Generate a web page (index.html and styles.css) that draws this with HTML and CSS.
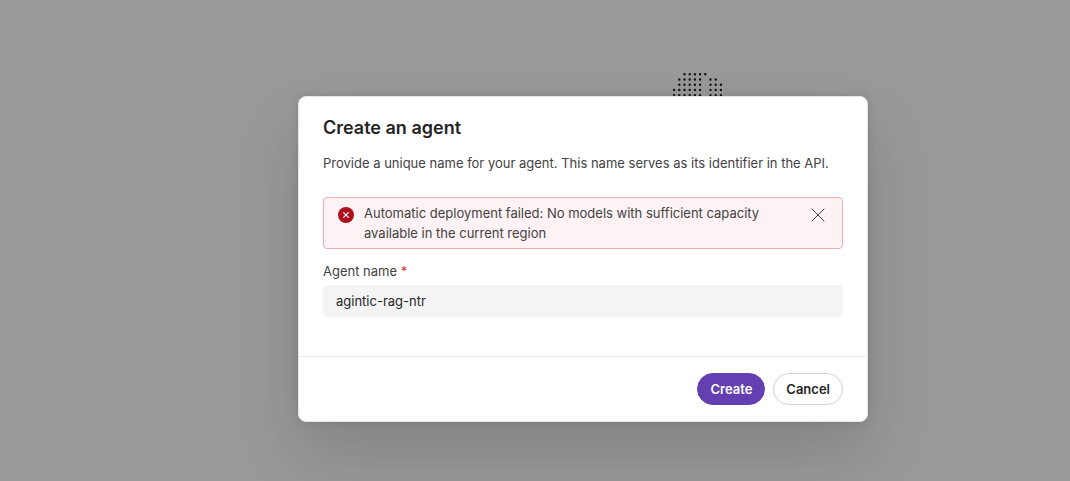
FILE: index.html
```
<!DOCTYPE html>
<html lang="en">

<head>
    <meta charset="UTF-8">
    <title>Create an agent</title>
    <link rel="stylesheet" href="styles.css">
</head>

<body>
    <main class="page">
        <svg class="dots" viewBox="0 0 52 26" aria-hidden="true">
            <path d="M12.5 2.3h21M7.3 7.5h21M38.5 7.5h5.3M7.3 12.7h21M38.5 12.7h10.5M2.1 17.9h26.1M38.5 17.9h10.5M2.1 23.1h26.1M38.5 23.1h10.5" />
        </svg>
    </main>

    <div class="overlay">
        <form class="dialog" role="dialog" aria-labelledby="dialog-title">
            <div class="dialog-body">
                <h1 id="dialog-title">Create an agent</h1>
                <p class="intro">Provide a unique name for your agent. This name serves as its identifier in the API.</p>

                <div class="alert" role="alert">
                    <svg class="alert-icon" viewBox="0 0 16 16" aria-hidden="true">
                        <circle cx="8" cy="8" r="8" />
                        <path d="M5.6 5.6l4.8 4.8M10.4 5.6l-4.8 4.8" />
                    </svg>
                    <p>Automatic deployment failed: No models with sufficient capacity available in the current region</p>
                    <button type="button" class="dismiss" aria-label="Dismiss">
                        <svg viewBox="0 0 14 14" aria-hidden="true">
                            <path d="M1 1l12 12M13 1L1 13" />
                        </svg>
                    </button>
                </div>

                <label for="agent-name">Agent name <span class="required">*</span></label>
                <input type="text" id="agent-name" value="agintic-rag-ntr" required>
            </div>

            <div class="dialog-footer">
                <button type="submit" class="btn btn-primary">Create</button>
                <button type="button" class="btn">Cancel</button>
            </div>
        </form>
    </div>
</body>

</html>
```

FILE: styles.css
```
* {
    box-sizing: border-box;
}

html,
body {
    height: 100%;
    margin: 0;
}

body {
    font-family: Inter, "Liberation Sans", sans-serif;
    font-size: 13px;
    line-height: 20px;
    color: #424242;
    background: #999;
    overflow: hidden;
}

h1,
p {
    margin: 0;
}

button,
input {
    font: inherit;
}

.page {
    display: flex;
    justify-content: center;
    padding: 72px 0 0 326px;
}

.dots {
    width: 52px;
    height: 26px;
    fill: none;
    stroke: #141414;
    stroke-width: 2.4;
    stroke-linecap: round;
    stroke-dasharray: 0 5.2;
}

.overlay {
    position: absolute;
    inset: 0;
    display: flex;
    justify-content: center;
    align-items: flex-start;
    padding: 96px 0 0 96px;
}

.dialog {
    width: 100%;
    max-width: 570px;
    border: 1px solid #e6e6e6;
    border-radius: 8px;
    background: #fff;
    box-shadow: 0 0 8px rgba(0, 0, 0, 0.12), 0 32px 64px rgba(0, 0, 0, 0.14);
}

.dialog-body {
    padding: 17px 24px 39px;
}

h1 {
    font-size: 18px;
    font-weight: 600;
    line-height: 28px;
    color: #242424;
}

.intro {
    margin-top: 11px;
}

.alert {
    display: flex;
    align-items: flex-start;
    margin: 24px 0 12px;
    padding: 5px 17px 5px 14px;
    border: 1px solid #eeacb2;
    border-radius: 4px;
    background: #fdf3f4;
}

.alert p {
    flex: 1;
    margin: 0 48px 0 10px;
}

.alert-icon {
    width: 16px;
    height: 16px;
    margin-top: 4px;
    fill: #b10e1c;
    stroke: none;
}

.alert-icon path {
    stroke: #fff;
    stroke-width: 1.2;
    stroke-linecap: round;
}

.dismiss {
    display: flex;
    margin-top: 5px;
    padding: 0;
    border: 0;
    background: none;
}

.dismiss svg {
    width: 14px;
    height: 14px;
    stroke: #424242;
    stroke-linecap: round;
}

label {
    display: block;
    margin-bottom: 4px;
}

.required {
    color: #d13438;
}

input {
    display: block;
    width: 100%;
    height: 32px;
    padding: 0 13px;
    border: 0;
    border-radius: 4px;
    background: #f4f4f4;
    color: #242424;
}

.dialog-footer {
    display: flex;
    justify-content: flex-end;
    gap: 8px;
    padding: 16px 24px;
    border-top: 1px solid #ebebeb;
}

.btn {
    height: 32px;
    padding: 0 12px;
    border: 1px solid #d1d1d1;
    border-radius: 16px;
    background: #fff;
    color: #242424;
    font-weight: 600;
}

.btn-primary {
    border-color: #643fb2;
    background: #643fb2;
    color: #fff;
}
```
